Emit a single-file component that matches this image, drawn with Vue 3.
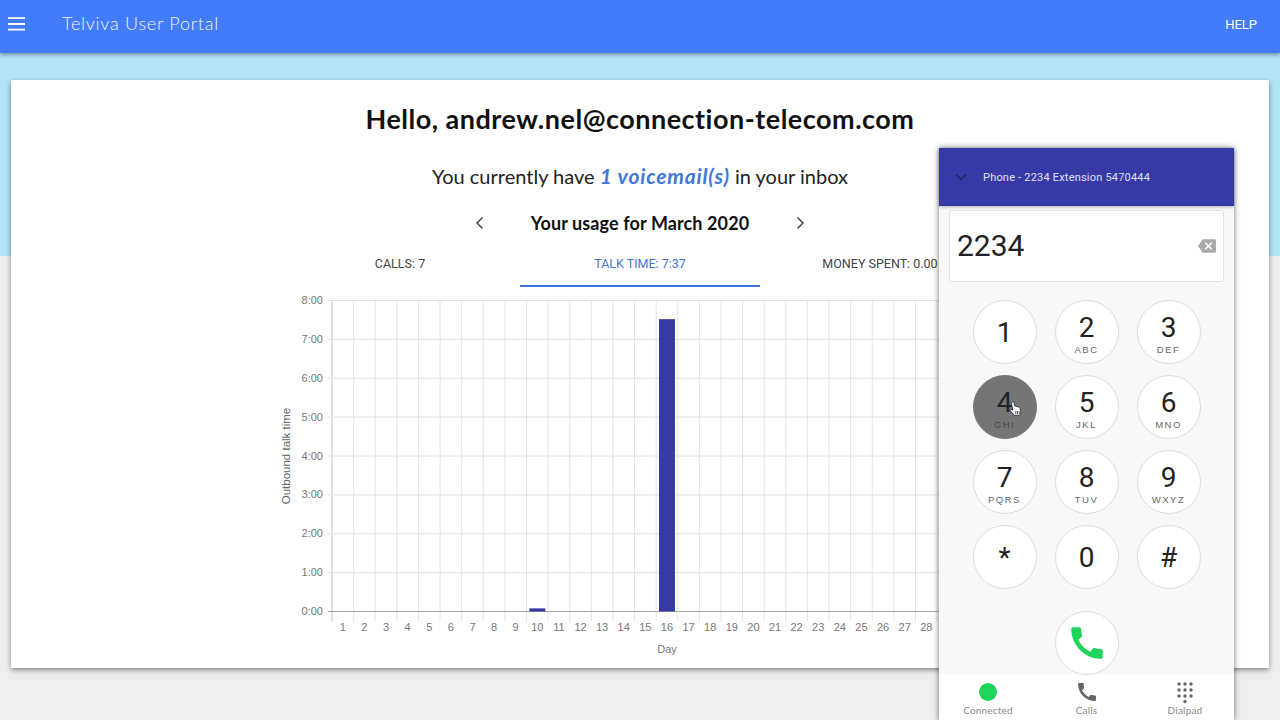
<script setup>
const tabs = [
  { label: 'CALLS: 7', active: false },
  { label: 'TALK TIME: 7:37', active: true },
  { label: 'MONEY SPENT: 0.00', active: false },
]

const keys = [
  { digit: '1', letters: '' },
  { digit: '2', letters: 'ABC' },
  { digit: '3', letters: 'DEF' },
  { digit: '4', letters: 'GHI', pressed: true },
  { digit: '5', letters: 'JKL' },
  { digit: '6', letters: 'MNO' },
  { digit: '7', letters: 'PQRS' },
  { digit: '8', letters: 'TUV' },
  { digit: '9', letters: 'WXYZ' },
  { digit: '*', letters: '' },
  { digit: '0', letters: '' },
  { digit: '#', letters: '' },
]

// chart geometry, in svg coordinates
const left = 62
const top = 10.5
const stepX = 21.61
const stepY = 38.875
const base = top + stepY * 8

const hours = [8, 7, 6, 5, 4, 3, 2, 1, 0]
const days = Array.from({ length: 31 }, (_, i) => i + 1)
const bars = [
  { day: 10, minutes: 0.08 },
  { day: 16, minutes: 7.52 },
]
const barX = (day) => left + (day - 1) * stepX + 2.8
const barH = (m) => m * stepY

const dialDots = [
  [6, 4], [12, 4], [18, 4],
  [6, 10], [12, 10], [18, 10],
  [6, 16], [12, 16], [18, 16],
  [12, 21.5],
]

const phonePath = 'M20.01 15.38c-1.23 0-2.42-.2-3.53-.56a.977.977 0 0 0-1.01.24l-1.57 1.97c-2.83-1.35-5.48-3.9-6.89-6.83l1.95-1.66c.27-.28.35-.67.24-1.02-.37-1.11-.56-2.3-.56-3.53 0-.54-.45-.99-.99-.99H4.19C3.65 3 3 3.24 3 3.99 3 13.28 10.73 21 20.01 21c.71 0 .99-.63.99-1.18v-3.45c0-.54-.45-.99-.99-.99z'
</script>

<template>
  <div class="page">
    <header class="topbar">
      <svg class="menu" width="17" height="16" viewBox="0 0 17 16">
        <path d="M0 2.2h17M0 8h17M0 13.6h17" stroke="#fff" stroke-width="1.8" fill="none" />
      </svg>
      <span class="brand">Telviva User Portal</span>
      <span class="help">HELP</span>
    </header>

    <main class="card">
      <h1>Hello, andrew.nel@connection-telecom.com</h1>
      <p class="inbox">You currently have <a>1 voicemail(s)</a> in your inbox</p>

      <div class="month">
        <svg width="10" height="14" viewBox="0 0 10 14">
          <path d="M7.5 1.5 2 7l5.5 5.5" stroke="#444" stroke-width="1.5" fill="none" />
        </svg>
        <h2>Your usage for March 2020</h2>
        <svg width="10" height="14" viewBox="0 0 10 14">
          <path d="M2.5 1.5 8 7l-5.5 5.5" stroke="#444" stroke-width="1.5" fill="none" />
        </svg>
      </div>

      <div class="tabs">
        <div v-for="t in tabs" :key="t.label" class="tab" :class="{ active: t.active }">{{ t.label }}</div>
      </div>

      <svg class="chart" width="740" height="372" viewBox="0 0 740 372">
        <g v-for="(d, i) in [0, ...days]" :key="'v' + i">
          <line
            :x1="left + d * stepX"
            :x2="left + d * stepX"
            :y1="top"
            :y2="base + 10"
            :stroke="d === 0 ? '#c4c4c4' : '#e4e4e4'"
          />
        </g>
        <g v-for="(h, i) in hours" :key="h">
          <line
            :x1="left - 4"
            :x2="left + 31 * stepX"
            :y1="top + i * stepY"
            :y2="top + i * stepY"
            :stroke="h === 0 ? '#a8a8a8' : '#e2e2e2'"
          />
          <text class="tick" :x="left - 9" :y="top + i * stepY + 3.5" text-anchor="end">{{ h }}:00</text>
        </g>
        <rect
          v-for="b in bars"
          :key="b.day"
          :x="barX(b.day)"
          :y="base - barH(b.minutes)"
          width="16"
          :height="barH(b.minutes)"
          fill="#3739a6"
        />
        <text
          v-for="d in days"
          :key="'l' + d"
          class="tick"
          :x="left + (d - 0.5) * stepX"
          :y="base + 19"
          text-anchor="middle"
        >{{ d }}</text>
        <text class="tick" x="397" y="363" text-anchor="middle">Day</text>
        <text class="tick axis" transform="translate(19.5 166) rotate(-90)" text-anchor="middle">Outbound talk time</text>
      </svg>
    </main>

    <aside class="phone">
      <div class="phone-head">
        <svg width="12" height="8" viewBox="0 0 12 8">
          <path d="M1 1.5 6 6.5l5-5" stroke="#1e2468" stroke-width="1.5" fill="none" />
        </svg>
        <span>Phone - 2234 Extension 5470444</span>
      </div>

      <div class="number">
        <span>2234</span>
        <svg class="backspace" width="18" height="18" viewBox="0 0 24 24">
          <path fill="#ababab" d="M22 3H7c-.69 0-1.23.35-1.59.88L0 12l5.41 8.11c.36.53.9.89 1.59.89h15c1.1 0 2-.9 2-2V5c0-1.1-.9-2-2-2zm-3 12.59L17.59 17 14 13.41 10.41 17 9 15.59 12.59 12 9 8.41 10.41 7 14 10.59 17.59 7 19 8.41 15.41 12 19 15.59z" />
        </svg>
      </div>

      <div class="keypad">
        <button v-for="k in keys" :key="k.digit" class="key" :class="{ pressed: k.pressed, solo: !k.letters }">
          <span class="digit">{{ k.digit }}</span>
          <span v-if="k.letters" class="letters">{{ k.letters }}</span>
          <svg v-if="k.pressed" class="cursor" width="14" height="16" viewBox="0 0 14 16">
            <path d="M3 1.2c.8-.7 1.8-.2 2 .7l.8 3.2c.7-.4 1.500-.2 1.800.5.700-.4 1.500-.1 1.700.6.700-.3 1.500.1 1.700.8l.6 3.400c.2 1.800-.4 3.300-1.500 4.200H5.500L1.500 9.800c-.6-.8.2-1.800 1.200-1.300l1.100.7-1.300-6.400c-.1-.8.1-1.300.5-1.600z" fill="#fff" stroke="#222" stroke-width=".8" />
            <path d="M6.800 10v3.500M8.500 10v3.500M10.200 10v3.500" stroke="#333" stroke-width=".8" />
          </svg>
        </button>
      </div>

      <div class="call-row">
        <button class="key call">
          <svg width="42" height="42" viewBox="0 0 24 24">
            <path fill="#1fd45a" :d="phonePath" />
          </svg>
        </button>
      </div>

      <nav class="phone-nav">
        <div class="nav-item">
          <span class="dot"></span>
          <span>Connected</span>
        </div>
        <div class="nav-item">
          <svg width="24" height="24" viewBox="0 0 24 24">
            <path fill="#666" :d="phonePath" />
          </svg>
          <span>Calls</span>
        </div>
        <div class="nav-item">
          <svg width="24" height="24" viewBox="0 0 24 24">
            <circle v-for="(p, i) in dialDots" :key="i" :cx="p[0]" :cy="p[1]" r="1.7" fill="#666" />
          </svg>
          <span>Dialpad</span>
        </div>
      </nav>
    </aside>
  </div>
</template>

<style scoped>
.page {
  position: relative;
  height: 720px;
  overflow: hidden;
  background: linear-gradient(#b3e4f8 256px, #eeeeee 256px);
  font-family: Lato, "Open Sans", sans-serif;
  color: #111;
}
.topbar {
  height: 53px;
  background: #427cfb;
  color: #fff;
  display: flex;
  align-items: center;
  padding: 0 23px 0 8px;
  box-shadow: 0 2px 4px rgba(0, 0, 0, 0.35);
}
.menu {
  margin-right: 37px;
  margin-top: -5px;
}
.brand {
  font-size: 18px;
  font-weight: 300;
  letter-spacing: 0.75px;
  color: #eef3ff;
  margin-top: -7px;
}
.help {
  margin-left: auto;
  font-size: 13px;
  font-family: Roboto, sans-serif;
  margin-top: -4px;
}
.card {
  margin: 27px 11px 0;
  height: 588px;
  background: #fff;
  box-shadow: 0 2px 5px rgba(0, 0, 0, 0.45);
  display: flex;
  flex-direction: column;
  align-items: center;
  padding-top: 23px;
  box-sizing: border-box;
}
h1 {
  margin: 0;
  font-size: 27px;
  line-height: 32px;
  font-weight: 700;
  letter-spacing: 0.5px;
}
.inbox {
  margin: 29px 0 0;
  font-size: 20px;
  line-height: 24px;
  color: #222;
}
.inbox a {
  color: #3f78d8;
  font-size: 21px;
  font-weight: 700;
  font-style: italic;
  letter-spacing: 0.8px;
}
.month {
  margin-top: 23px;
  display: flex;
  align-items: center;
  gap: 46px;
}
h2 {
  margin: 0;
  font-size: 18px;
  line-height: 24px;
  font-weight: 700;
  letter-spacing: 0.1px;
}
.tabs {
  margin-top: 7px;
  display: flex;
}
.tab {
  width: 240px;
  height: 45px;
  box-sizing: border-box;
  display: flex;
  align-items: center;
  justify-content: center;
  padding-bottom: 1px;
  font-family: Roboto, sans-serif;
  font-size: 12.5px;
  color: #444;
  border-bottom: 2px solid transparent;
}
.tab.active {
  color: #3f78d8;
  border-bottom-color: #3f78d8;
}
.chart {
  margin-top: 3px;
  display: block;
}
.tick {
  font-family: "Liberation Sans", sans-serif;
  font-size: 11px;
  fill: #777;
}
.axis {
  font-size: 11.5px;
  fill: #666;
}
.phone {
  position: absolute;
  left: 939px;
  top: 148px;
  width: 295px;
  height: 572px;
  background: #f8f8f8;
  box-shadow: 0 0 6px rgba(0, 0, 0, 0.55);
  display: flex;
  flex-direction: column;
  font-family: Roboto, sans-serif;
}
.phone-head {
  height: 58px;
  flex: none;
  background: #3739a6;
  color: #dfe0f5;
  font-size: 11px;
  letter-spacing: 0.2px;
  display: flex;
  align-items: center;
  gap: 16px;
  padding-left: 16px;
  box-shadow: 0 1px 3px rgba(0, 0, 0, 0.3);
}
.number {
  margin: 4px 10px 0;
  height: 72px;
  flex: none;
  box-sizing: border-box;
  background: #fff;
  border: 1px solid #e2e2e2;
  border-radius: 3px;
  display: flex;
  align-items: center;
  justify-content: space-between;
  padding: 0 7px 2px 7px;
  font-size: 30px;
  color: #222;
}
.backspace {
  margin-top: 2px;
}
.keypad {
  margin-top: 18px;
  display: grid;
  grid-template-columns: repeat(3, 64px);
  justify-content: center;
  column-gap: 18px;
  row-gap: 11px;
}
.key {
  position: relative;
  width: 64px;
  height: 64px;
  padding: 0;
  box-sizing: border-box;
  border: 1px solid #dcdcdc;
  border-radius: 50%;
  background: #fff;
  display: flex;
  flex-direction: column;
  align-items: center;
  justify-content: center;
  font-family: Roboto, sans-serif;
  color: #222;
}
.key.pressed {
  background: #757575;
  border-color: #757575;
}
.digit {
  font-size: 28px;
  line-height: 32px;
  margin-top: 3px;
}
.solo .digit {
  margin-top: 2px;
}
.letters {
  font-family: "Liberation Sans", sans-serif;
  font-size: 9.5px;
  line-height: 12px;
  letter-spacing: 1.5px;
  color: #666;
  margin-top: 0;
}
.pressed .letters {
  color: #444;
}
.cursor {
  position: absolute;
  left: 35px;
  top: 25px;
}
.call-row {
  margin-top: 22px;
  display: flex;
  justify-content: center;
  height: 63px;
}
.phone-nav {
  flex: 1;
  background: #fff;
  display: grid;
  grid-template-columns: 98px 99px 98px;
}
.nav-item {
  display: flex;
  flex-direction: column;
  align-items: center;
  padding-top: 6px;
  font-size: 10px;
  line-height: 12px;
  color: #888;
  font-family: Lato, sans-serif;
  letter-spacing: 0.2px;
}
.dot {
  width: 18px;
  height: 18px;
  margin: 3px 0 3px;
  border-radius: 50%;
  background: #1fd45a;
}
</style>
